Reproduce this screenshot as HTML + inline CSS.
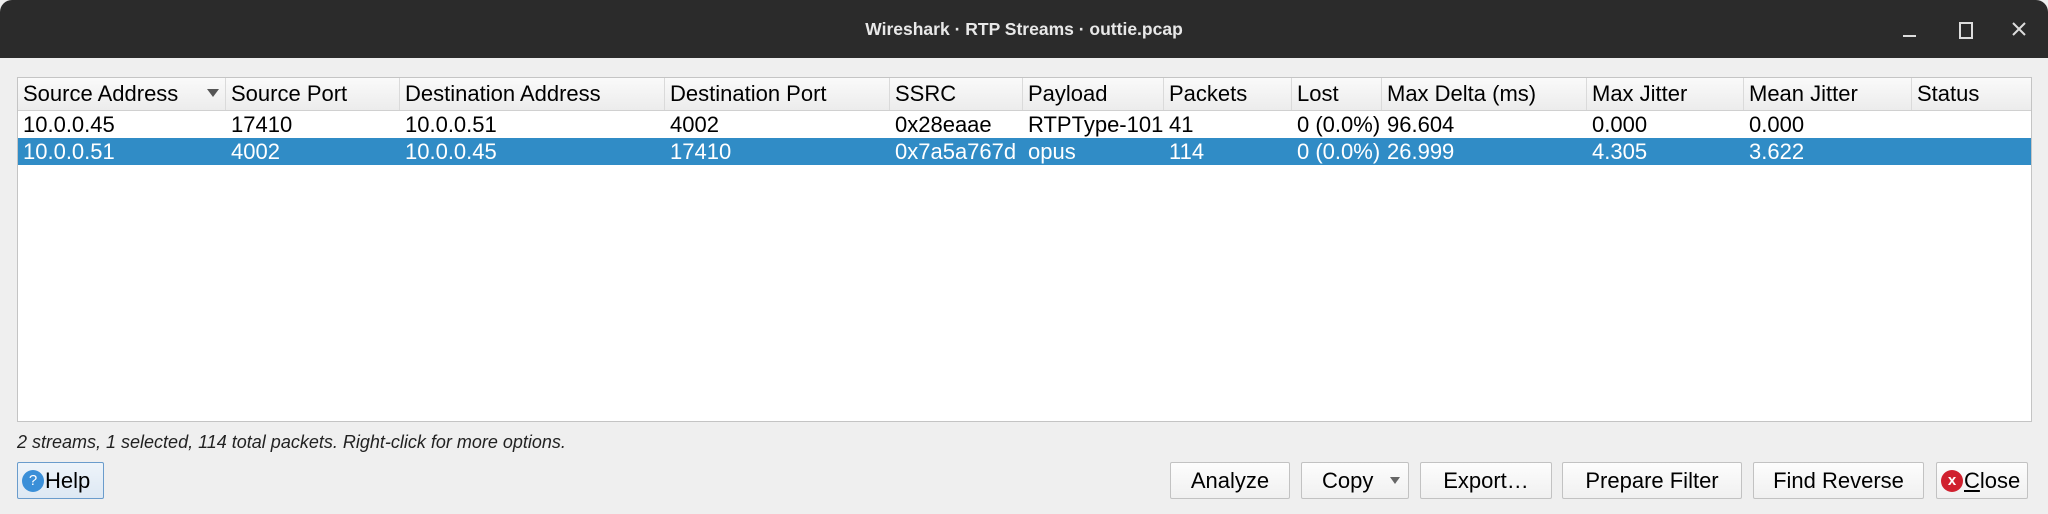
<!DOCTYPE html>
<html><head><meta charset="utf-8"><style>
html,body{margin:0;padding:0;width:2048px;height:514px;overflow:hidden;background:#efefef}
#w{position:absolute;left:0;top:0;width:2048px;height:514px;font-family:"Liberation Sans",sans-serif;color:#000}
.tb{position:absolute;left:0;top:0;width:2048px;height:58px;background:#2b2b2b;border-radius:12px 12px 0 0}
.title{position:absolute;top:0;left:0;width:2048px;text-align:center;line-height:58px;color:#e8e8e8;font-weight:bold;font-size:17.5px}
.tbl{position:absolute;left:17px;top:77px;width:2013px;height:343px;background:#fff;border:1px solid #c4c4c4}
.hdr{position:absolute;left:0;top:0;width:100%;height:32px;background:linear-gradient(#fafafa,#ececec);border-bottom:1px solid #d0d0d0}
.c{position:absolute;font-size:22px;white-space:nowrap;padding-left:5px;box-sizing:border-box;height:100%;line-height:32px;border-right:1px solid #dadada}
.row{position:absolute;left:0;width:100%;height:27px}
.row .c{line-height:27px;border:none}
.sel{background:#308cc6;color:#fff}
.st{position:absolute;left:17px;top:432px;font-size:18px;font-style:italic;color:#222}
.btn{position:absolute;top:462px;height:37px;border:1px solid #c2c2c2;border-radius:2px;background:linear-gradient(#fdfdfd,#f0f0f0);font-size:22px;box-sizing:border-box;display:flex;align-items:center;justify-content:center}
.ic{display:inline-block;width:22px;height:22px;border-radius:50%;color:#fff;font-size:15px;line-height:22px;text-align:center;margin-right:1px}
</style></head><body><div id="w">
<div class="tb"></div>
<div class="title">Wireshark · RTP Streams · outtie.pcap</div>
<div style="position:absolute;left:1903px;top:35px;width:13px;height:2px;background:#ddd"></div>
<div style="position:absolute;left:1959px;top:22px;width:10px;height:13px;border:2px solid #ddd"></div>
<svg style="position:absolute;left:2012px;top:22px" width="14" height="14"><path d="M1 1L13 13M13 1L1 13" stroke="#ddd" stroke-width="2"/></svg>
<div class="tbl">
<div class="hdr">
<div class="c" style="left:0;width:208px">Source Address<svg style="position:absolute;left:189px;top:11px" width="12" height="9"><path d="M0 0H12L6 8Z" fill="#555"/></svg></div>
<div class="c" style="left:208px;width:174px">Source Port</div>
<div class="c" style="left:382px;width:265px">Destination Address</div>
<div class="c" style="left:647px;width:225px">Destination Port</div>
<div class="c" style="left:872px;width:133px">SSRC</div>
<div class="c" style="left:1005px;width:141px">Payload</div>
<div class="c" style="left:1146px;width:128px">Packets</div>
<div class="c" style="left:1274px;width:90px">Lost</div>
<div class="c" style="left:1364px;width:205px">Max Delta (ms)</div>
<div class="c" style="left:1569px;width:157px">Max Jitter</div>
<div class="c" style="left:1726px;width:168px">Mean Jitter</div>
<div class="c" style="left:1894px;width:119px;border:none">Status</div>
</div>
<div class="row" style="top:33px">
<div class="c" style="left:0">10.0.0.45</div><div class="c" style="left:208px">17410</div><div class="c" style="left:382px">10.0.0.51</div><div class="c" style="left:647px">4002</div><div class="c" style="left:872px">0x28eaae</div><div class="c" style="left:1005px">RTPType-101</div><div class="c" style="left:1146px">41</div><div class="c" style="left:1274px">0 (0.0%)</div><div class="c" style="left:1364px">96.604</div><div class="c" style="left:1569px">0.000</div><div class="c" style="left:1726px">0.000</div>
</div>
<div class="row sel" style="top:60px">
<div class="c" style="left:0">10.0.0.51</div><div class="c" style="left:208px">4002</div><div class="c" style="left:382px">10.0.0.45</div><div class="c" style="left:647px">17410</div><div class="c" style="left:872px">0x7a5a767d</div><div class="c" style="left:1005px">opus</div><div class="c" style="left:1146px">114</div><div class="c" style="left:1274px">0 (0.0%)</div><div class="c" style="left:1364px">26.999</div><div class="c" style="left:1569px">4.305</div><div class="c" style="left:1726px">3.622</div>
</div>
</div>
<div class="st">2 streams, 1 selected, 114 total packets. Right-click for more options.</div>
<div class="btn" style="left:17px;width:87px;border-color:#6a9ccc;background:linear-gradient(#eef4fa,#dde8f3);justify-content:flex-start;padding-left:4px"><span class="ic" style="background:#3a8fd8">?</span>Help</div>
<div class="btn" style="left:1170px;width:120px">Analyze</div>
<div class="btn" style="left:1301px;width:108px;justify-content:flex-start;padding-left:20px">Copy<svg style="position:absolute;right:8px;top:14px" width="10" height="8"><path d="M0 0H10L5 7Z" fill="#666"/></svg></div>
<div class="btn" style="left:1420px;width:132px">Export…</div>
<div class="btn" style="left:1562px;width:180px">Prepare Filter</div>
<div class="btn" style="left:1753px;width:171px">Find Reverse</div>
<div class="btn" style="left:1936px;width:92px;justify-content:flex-start;padding-left:4px"><span class="ic" style="background:#d0202e;font-weight:bold">x</span><u>C</u>lose</div>
</div></body></html>
